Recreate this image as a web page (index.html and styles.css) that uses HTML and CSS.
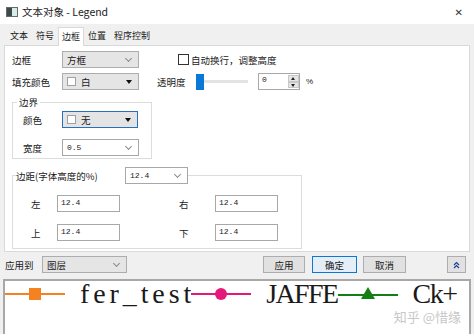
FILE: index.html
```html
<!DOCTYPE html>
<html lang="zh">
<head>
  <meta charset="UTF-8">
  <title>文本对象 - Legend</title>
  <link rel="stylesheet" href="styles.css">
</head>
<body>

  <div class="titlebar">
    <svg class="app-icon" width="12" height="10" viewBox="0 0 12 10">
      <rect x="0.5" y="0.5" width="11" height="9" fill="#fff" stroke="#6a6a6a"/>
      <rect x="1" y="1" width="5" height="8" fill="#3c4a4a"/>
      <rect x="6" y="1" width="5" height="8" fill="#d8ece8"/>
    </svg>
    <span class="title">文本对象 - Legend</span>
    <span class="close">✕</span>
  </div>

  <div class="tabs">
    <div class="tab">文本</div>
    <div class="tab">符号</div>
    <div class="tab active">边框</div>
    <div class="tab">位置</div>
    <div class="tab">程序控制</div>
  </div>

  <div class="panel">
    <div class="row row-first">
      <span class="label">边框</span>
      <div class="combo gray">方框<span class="chev"></span></div>
      <label class="check"><span class="box"></span>自动换行，调整高度</label>
    </div>

    <div class="row row-second">
      <span class="label">填充颜色</span>
      <div class="combo gray"><span class="swatch"></span>白<span class="tri"></span></div>
      <span class="label-alpha">透明度</span>
      <div class="slider"><span class="thumb"></span><span class="track"></span></div>
      <div class="spin">
        <span class="spin-val">0</span>
        <span class="spin-btns"><span class="up"></span><span class="down"></span></span>
      </div>
      <span class="pct">%</span>
    </div>

    <fieldset class="group group-border">
      <legend>边界</legend>
      <div class="row">
        <span class="label small">颜色</span>
        <div class="combo gray focus"><span class="swatch"></span>无<span class="tri"></span></div>
      </div>
      <div class="row row-gap">
        <span class="label small">宽度</span>
        <div class="combo white mono">0.5<span class="chev"></span></div>
      </div>
    </fieldset>

    <fieldset class="group group-margin">
      <legend>
        <span class="legend-label">边距(字体高度的%)</span>
        <div class="combo white mono narrow">12.4<span class="chev"></span></div>
      </legend>
      <div class="grid">
        <span class="glabel">左</span><div class="input">12.4</div>
        <span class="glabel">右</span><div class="input">12.4</div>
        <span class="glabel">上</span><div class="input">12.4</div>
        <span class="glabel">下</span><div class="input">12.4</div>
      </div>
    </fieldset>
  </div>

  <div class="footer">
    <span class="apply-label">应用到</span>
    <div class="combo gray wide">图层<span class="chev"></span></div>
    <button class="btn btn-apply">应用</button>
    <button class="btn btn-ok">确定</button>
    <button class="btn btn-cancel">取消</button>
    <button class="btn btn-collapse">
      <svg width="7" height="8" viewBox="0 0 7 8">
        <path d="M1 4 L3.5 1.5 L6 4 M1 7 L3.5 4.5 L6 7" fill="none" stroke="#1f3d9a" stroke-width="1.2"/>
      </svg>
    </button>
  </div>

  <div class="preview">
    <div class="legend-items">
      <svg class="sym" width="60" height="14" viewBox="0 0 60 14">
        <line x1="0" y1="7" x2="60" y2="7" stroke="#f58220" stroke-width="2"/>
        <rect x="24" y="1" width="12" height="12" fill="#f58220"/>
      </svg>
      <span class="item-text text-fer">fer_test</span>
      <svg class="sym" width="60" height="14" viewBox="0 0 60 14">
        <line x1="0" y1="7" x2="60" y2="7" stroke="#e5197a" stroke-width="2"/>
        <circle cx="30" cy="7" r="6" fill="#e5197a"/>
      </svg>
      <span class="item-text text-jaffe">JAFFE</span>
      <svg class="sym" width="60" height="14" viewBox="0 0 60 14">
        <line x1="0" y1="8" x2="60" y2="8" stroke="#127f12" stroke-width="2"/>
        <polygon points="30,0 37,12 23,12" fill="#127f12"/>
      </svg>
      <span class="item-text text-ck">Ck+</span>
    </div>
    <span class="watermark">知乎 @惜缘</span>
  </div>

</body>
</html>
```

FILE: styles.css
```css
* {
  margin: 0;
  padding: 0;
  box-sizing: border-box;
}

body {
  width: 474px;
  height: 334px;
  overflow: hidden;
  background: #f0f0f0;
  font-family: "Noto Sans CJK SC", "Liberation Sans", sans-serif;
  font-size: 9.5px;
  color: #1a1a1a;
}

/* title bar */
.titlebar {
  display: flex;
  align-items: center;
  height: 24px;
  padding-left: 6px;
  background: #fff;
}

.title {
  margin-left: 4px;
  font-size: 10.5px;
  line-height: 14px;
}

.close {
  margin-left: auto;
  margin-right: 11px;
  font-family: "DejaVu Sans", sans-serif;
  font-size: 10px;
  color: #333;
}

/* tabs */
.tabs {
  display: flex;
  align-items: flex-end;
  height: 21px;
  padding-left: 6px;
  font-size: 9px;
}

.tab {
  height: 17px;
  padding: 0 4px;
  line-height: 16px;
}

.tab.active {
  height: 19px;
  margin-bottom: -1px;
  line-height: 18px;
  padding: 0 3px;
  background: #fff;
  border: 1px solid #d9d9d9;
  border-bottom: none;
  position: relative;
  z-index: 1;
}

/* main panel */
.panel {
  height: 207px;
  margin: 0 4px;
  padding: 5px 0 0 7px;
  background: #fff;
  border: 1px solid #d9d9d9;
}

.row {
  display: flex;
  align-items: center;
}

.row-second {
  margin-top: 5px;
}

.label {
  width: 50px;
  line-height: 12px;
}

.label.small {
  width: 39px;
}

.combo {
  position: relative;
  display: flex;
  align-items: center;
  width: 77px;
  height: 17px;
  padding-left: 4px;
  line-height: 12px;
  border: 1px solid #adadad;
}

.combo.gray {
  background: #e5e5e5;
}

.combo.white {
  background: #fff;
  border-color: #a8a8a8;
}

.combo.focus {
  width: 76px;
  border-color: #2a6ebf;
  background: #e4e4e4;
}

.combo.mono {
  font-family: "Liberation Mono", monospace;
  font-size: 8px;
}

.combo.narrow {
  width: 63px;
}

.combo.wide {
  width: 85px;
}

.chev {
  position: absolute;
  right: 7px;
  top: 4px;
  width: 5px;
  height: 5px;
  border-right: 1px solid #8a8a8a;
  border-bottom: 1px solid #8a8a8a;
  transform: rotate(45deg);
}

.tri {
  position: absolute;
  right: 6px;
  top: 6px;
  border-left: 3px solid transparent;
  border-right: 3px solid transparent;
  border-top: 4px solid #111;
}

.swatch {
  width: 9px;
  height: 9px;
  margin-right: 5px;
  background: #fff;
  border: 1px solid #a0a0a0;
}

.check {
  display: flex;
  align-items: center;
  margin-left: 39px;
  line-height: 12px;
}

.box {
  width: 11px;
  height: 11px;
  margin-right: 2px;
  border: 1px solid #333;
  background: #fff;
}

.label-alpha {
  width: 39px;
  margin-left: 18px;
  line-height: 12px;
}

.slider {
  display: flex;
  align-items: center;
  width: 52px;
  height: 17px;
}

.thumb {
  width: 8px;
  height: 16px;
  background: #0a78d7;
}

.track {
  flex: 1;
  height: 3px;
  background: #e3e3e3;
}

.spin {
  display: flex;
  width: 42px;
  height: 17px;
  margin-left: 10px;
  border: 1px solid #a8a8a8;
}

.spin-val {
  flex: 1;
  padding-left: 3px;
  font-family: "Liberation Mono", monospace;
  font-size: 8px;
  line-height: 11px;
}

.spin-btns {
  display: flex;
  flex-direction: column;
  justify-content: space-between;
  width: 11px;
  padding: 1px 0;
}

.spin-btns span {
  position: relative;
  height: 7px;
  background: #e6e6e6;
  border: 1px solid #c8c8c8;
}

.up::after,
.down::after {
  content: "";
  position: absolute;
  left: 2px;
  border-left: 2.5px solid transparent;
  border-right: 2.5px solid transparent;
}

.up::after {
  top: 1px;
  border-bottom: 3px solid #222;
}

.down::after {
  top: 1px;
  border-top: 3px solid #222;
}

.pct {
  margin-left: 6px;
  font-family: "Liberation Sans", sans-serif;
  font-size: 8px;
}

/* group boxes */
.group {
  border: 1px solid #dcdcdc;
  min-width: 0;
}

.group legend {
  line-height: 12px;
}

.group-border {
  width: 140px;
  margin-top: 6px;
  padding: 3px 0 2px 10px;
}

.group-border legend {
  padding: 0 2px;
  margin-left: -6px;
}

.row-gap {
  margin-top: 11px;
}

.group-margin {
  width: 290px;
  height: 82px;
  margin-top: 8px;
  padding: 1px 0 0 17px;
}

.group-margin legend {
  display: flex;
  align-items: center;
  margin-left: -14px;
}

.legend-label {
  width: 109px;
}

.grid {
  display: grid;
  grid-template-columns: 27px 63px 58px 37px 63px;
  row-gap: 12px;
  align-items: center;
  margin-top: 10px;
}

.grid .glabel:nth-child(3),
.grid .glabel:nth-child(7) {
  grid-column: 4;
}

.glabel {
  padding-left: 1px;
  line-height: 12px;
}

.input {
  height: 17px;
  padding-left: 3px;
  border: 1px solid #a8a8a8;
  font-family: "Liberation Mono", monospace;
  font-size: 8px;
  line-height: 13px;
}

/* footer row */
.footer {
  display: flex;
  align-items: center;
  height: 17px;
  margin-top: 4px;
  padding-left: 5px;
}

.apply-label {
  width: 37px;
  line-height: 12px;
}

.btn {
  height: 17px;
  background: #e1e1e1;
  border: 1px solid #adadad;
  font-family: inherit;
  font-size: 9.5px;
  line-height: 12px;
  color: #1a1a1a;
}

.btn-apply {
  width: 42px;
  margin-left: 136px;
}

.btn-ok {
  width: 45px;
  margin-left: 7px;
  border-color: #0a78d7;
  background: #e5eef7;
}

.btn-cancel {
  width: 43px;
  margin-left: 6px;
}

.btn-collapse {
  display: flex;
  align-items: center;
  justify-content: center;
  width: 19px;
  margin-left: 41px;
}

/* legend preview */
.preview {
  position: relative;
  height: 60px;
  margin: 6px 3px 0;
  background: #fff;
  border: 2px solid #a8a8a8;
}

.legend-items {
  display: flex;
  align-items: center;
  height: 25px;
  font-family: "Liberation Serif", serif;
  font-size: 28px;
  line-height: 25px;
  color: #1a1a1a;
}

.sym {
  flex: none;
  margin-right: 15px;
}

.text-fer {
  letter-spacing: 3.9px;
  margin-right: -4px;
}

.text-jaffe {
  letter-spacing: -1.6px;
}

.text-ck {
  letter-spacing: -1.5px;
}

.watermark {
  position: absolute;
  right: 8px;
  top: 29px;
  font-size: 13px;
  line-height: 13px;
  color: #c8c8c8;
}
```
